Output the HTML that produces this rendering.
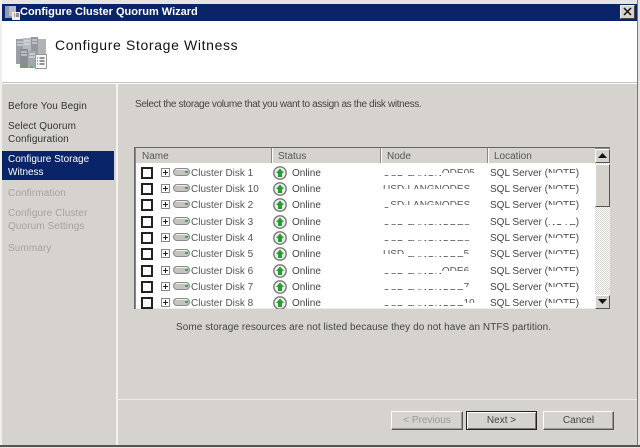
<!DOCTYPE html>
<html><head><meta charset="utf-8"><style>
html,body{margin:0;padding:0}
body{width:640px;height:448px;overflow:hidden;position:relative;background:#d6d3ce;font-family:"Liberation Sans",sans-serif;font-size:10px;color:#333}
div,span.a,svg{position:absolute}
.tx{white-space:nowrap;filter:blur(.3px);line-height:13px}
.g{color:#a5a29c}
.r{position:absolute;left:0;width:460px;height:16px}
.r .cb{left:7px;top:1px;width:8px;height:8px;border:2px solid #222;background:#fff}
.r .n{left:57px;top:1px;color:#555}
.r .s{left:158px;top:1px;color:#444}
.r .l{left:356px;top:1px;color:#444}
.r .d{left:222px;top:1px;width:100px;height:13px;color:#555;overflow:hidden}
.t{clip-path:inset(0 0 7px 0);display:inline-block}
.b{clip-path:inset(8px 0 0 0);display:inline-block}
.btn{height:17px;top:411px;background:#d6d3ce;border:1px solid;border-color:#fff #555 #555 #fff;box-shadow:inset -1px -1px 0 #999;text-align:center;line-height:17px;filter:blur(.2px)}
.hd{top:0;height:15px;line-height:17px;color:#555;filter:blur(.3px);border-right:1px solid #888;box-shadow:1px 0 0 #fff;box-sizing:border-box;padding-left:6px}
.sb{left:461px;width:13px;background:#d6d3ce;border:1px solid;border-color:#fff #555 #555 #fff}
</style></head><body>
<svg width="0" height="0" style="left:0;top:0">
<defs>
<g id="pl"><rect x=".5" y=".5" width="8" height="8" fill="#fff" stroke="#888"/><path d="M2 4.500h5M4.500 2v5" stroke="#222"/></g>
<g id="dk"><rect x=".5" y=".5" width="16" height="7" rx="3.500" fill="#c4c4c4" stroke="#8a8a8a"/><path d="M3 1.500h11" stroke="#eee"/><rect x="12" y="3" width="3" height="2" fill="#4a4"/></g>
<g id="up"><circle cx="7" cy="7" r="6.200" fill="#eee" stroke="#777" stroke-width="1.400"/><path d="M7 2.500L11 7H9V11H5V7H3z" fill="#1fa02f"/></g>
</defs></svg>

<div style="left:0;top:0;width:640px;height:4px;background:#e6e4e0"></div>
<div style="left:0;top:0;width:2px;height:448px;background:#f0efec"></div>
<div style="left:637px;top:0;width:1px;height:448px;background:#777"></div>
<div style="left:638px;top:0;width:2px;height:448px;background:#e6e4e0"></div>
<div style="left:0;top:445px;width:640px;height:2px;background:#555"></div>
<div style="left:0;top:447px;width:640px;height:1px;background:#e6e4e0"></div>

<div style="left:2px;top:4px;width:635px;height:17px;background:#0a246a"></div>
<svg style="left:4px;top:5px" width="16" height="15" viewBox="0 0 16 15"><rect x="1" y="1" width="9" height="12" fill="#8d9bb0"/><rect x="5" y="1" width="7" height="10" fill="#b8bec8"/><rect x="8" y="7" width="8" height="8" fill="#eee"/><path d="M10 9h1M10 11h1" stroke="#c22"/><path d="M12 9h3M12 11h3" stroke="#333"/></svg>
<div class="tx" style="left:20px;top:6px;color:#fff;font-weight:bold;font-size:11px">Configure Cluster Quorum Wizard</div>
<div style="left:620px;top:5px;width:13px;height:12px;background:#d6d3ce;border:1px solid;border-color:#eee #444 #444 #eee"></div>
<svg style="left:622px;top:6px" width="12" height="11" viewBox="0 0 12 11"><path d="M2 2l7 7M9 2l-7 7" stroke="#111" stroke-width="1.500"/></svg>

<div style="left:2px;top:21px;width:635px;height:61px;background:#fff"></div>
<div style="left:2px;top:82px;width:635px;height:1px;background:#c8c5bd"></div>
<div style="left:2px;top:83px;width:635px;height:1px;background:#fff"></div>
<svg style="left:14px;top:36px" width="33" height="33" viewBox="0 0 33 33">
<rect x="2" y="3" width="8" height="25" fill="#9a9ea6"/><rect x="9" y="2" width="8" height="26" fill="#b8bbc0"/><rect x="17" y="1" width="7" height="20" fill="#94989e"/><rect x="24" y="3" width="8" height="20" fill="#b0b2b4"/>
<rect x="6" y="13" width="8" height="19" fill="#8a8e94"/><rect x="14" y="15" width="8" height="17" fill="#a4a8ae"/>
<path d="M3 6h6M3 9h6M10 5h6M10 8h6M18 4h5M18 7h5M7 16h6M7 19h6M15 18h6M15 21h6" stroke="#e6e8ea"/>
<path d="M8 30h3M16 31h3" stroke="#4caf3c" stroke-width="1.500"/>
<rect x="21.500" y="18.500" width="11" height="14" fill="#f6f6f6" stroke="#999"/>
<path d="M23 22h1M23 25h1M23 28h1" stroke="#b33"/><path d="M25.500 22h5M25.500 25h5M25.500 28h5" stroke="#333"/></svg>
<div class="tx" style="left:55px;top:39px;color:#111;font-size:14px;letter-spacing:.64px">Configure Storage Witness</div>

<div style="left:116px;top:84px;width:2px;height:361px;background:#f3f2ef"></div>
<div style="left:118px;top:399px;width:519px;height:1px;background:#eeece8"></div>

<div class="tx" style="left:8px;top:100px;letter-spacing:.1px">Before You Begin</div>
<div class="tx" style="left:8px;top:120px;letter-spacing:.1px">Select Quorum<br>Configuration</div>
<div style="left:2px;top:151px;width:112px;height:29px;background:#0a246a"></div>
<div class="tx" style="left:8px;top:153px;color:#fff">Configure Storage<br>Witness</div>
<div class="tx g" style="left:8px;top:187px;letter-spacing:.1px">Confirmation</div>
<div class="tx g" style="left:8px;top:207px;letter-spacing:.1px">Configure Cluster<br>Quorum Settings</div>
<div class="tx g" style="left:8px;top:242px;letter-spacing:.1px">Summary</div>

<div class="tx" style="left:135px;top:98px;color:#444;letter-spacing:-.34px">Select the storage volume that you want to assign as the disk witness.</div>

<div style="left:134px;top:147px;width:476px;height:162px;background:#fff;box-shadow:inset 1px 1px 0 #666,inset 2px 2px 0 #888,inset -1px -1px 0 #eeece8;overflow:hidden">
 <div style="left:2px;top:1px;width:459px;height:15px;background:#d6d3ce;overflow:visible">
  <div class="hd" style="left:0;width:136px">Name</div>
  <div class="hd" style="left:136px;width:109px">Status</div>
  <div class="hd" style="left:245px;width:107px">Node</div>
  <div class="hd" style="left:352px;width:107px;border-right:0;box-shadow:none">Location</div>
 </div>

 <div class="r" style="top:19px"><div class="cb"></div><svg style="left:27px;top:2px" width="9" height="9"><use href="#pl"/></svg><svg style="left:39px;top:2px" width="18" height="9"><use href="#dk"/></svg><div class="tx n">Cluster Disk 1</div><svg style="left:139px;top:0" width="14" height="14"><use href="#up"/></svg><div class="tx s">Online</div><div class="tx d" style="left:249px"><span class="b">USD-LANGN</span><span class="t">ODE05</span></div><div class="tx l">SQL Server (<span class="t">NOTE</span>)</div></div>

 <div class="r" style="top:35px"><div class="cb"></div><svg style="left:27px;top:2px" width="9" height="9"><use href="#pl"/></svg><svg style="left:39px;top:2px" width="18" height="9"><use href="#dk"/></svg><div class="tx n">Cluster Disk 10</div><svg style="left:139px;top:0" width="14" height="14"><use href="#up"/></svg><div class="tx s">Online</div><div class="tx d" style="left:249px"><span class="t">USD-LANGNODES</span></div><div class="tx l">SQL Server (<span class="t">NOTE</span>)</div></div>

 <div class="r" style="top:51px"><div class="cb"></div><svg style="left:27px;top:2px" width="9" height="9"><use href="#pl"/></svg><svg style="left:39px;top:2px" width="18" height="9"><use href="#dk"/></svg><div class="tx n">Cluster Disk 2</div><svg style="left:139px;top:0" width="14" height="14"><use href="#up"/></svg><div class="tx s">Online</div><div class="tx d" style="left:249px"><span class="b">U</span><span class="t">SD-LANGNODES</span></div><div class="tx l">SQL Server (<span class="t">NOTE</span>)</div></div>

 <div class="r" style="top:68px"><div class="cb"></div><svg style="left:27px;top:2px" width="9" height="9"><use href="#pl"/></svg><svg style="left:39px;top:2px" width="18" height="9"><use href="#dk"/></svg><div class="tx n">Cluster Disk 3</div><svg style="left:139px;top:0" width="14" height="14"><use href="#up"/></svg><div class="tx s">Online</div><div class="tx d" style="left:249px"><span class="b">USD-LANGNODES</span></div><div class="tx l">SQL Server (<span class="b">NOTE</span>)</div></div>

 <div class="r" style="top:84px"><div class="cb"></div><svg style="left:27px;top:2px" width="9" height="9"><use href="#pl"/></svg><svg style="left:39px;top:2px" width="18" height="9"><use href="#dk"/></svg><div class="tx n">Cluster Disk 4</div><svg style="left:139px;top:0" width="14" height="14"><use href="#up"/></svg><div class="tx s">Online</div><div class="tx d" style="left:249px"><span class="b">USD-LANGNODES</span></div><div class="tx l">SQL Server (<span class="t">NOTE</span>)</div></div>

 <div class="r" style="top:100px"><div class="cb"></div><svg style="left:27px;top:2px" width="9" height="9"><use href="#pl"/></svg><svg style="left:39px;top:2px" width="18" height="9"><use href="#dk"/></svg><div class="tx n">Cluster Disk 5</div><svg style="left:139px;top:0" width="14" height="14"><use href="#up"/></svg><div class="tx s">Online</div><div class="tx d" style="left:249px"><span class="t">USD</span><span class="b">-LANGNODE</span><span class="t">5</span></div><div class="tx l">SQL Server (<span class="t">NOTE</span>)</div></div>

 <div class="r" style="top:117px"><div class="cb"></div><svg style="left:27px;top:2px" width="9" height="9"><use href="#pl"/></svg><svg style="left:39px;top:2px" width="18" height="9"><use href="#dk"/></svg><div class="tx n">Cluster Disk 6</div><svg style="left:139px;top:0" width="14" height="14"><use href="#up"/></svg><div class="tx s">Online</div><div class="tx d" style="left:249px"><span class="b">USD-LANGN</span><span class="t">ODE6</span></div><div class="tx l">SQL Server (<span class="t">NOTE</span>)</div></div>

 <div class="r" style="top:133px"><div class="cb"></div><svg style="left:27px;top:2px" width="9" height="9"><use href="#pl"/></svg><svg style="left:39px;top:2px" width="18" height="9"><use href="#dk"/></svg><div class="tx n">Cluster Disk 7</div><svg style="left:139px;top:0" width="14" height="14"><use href="#up"/></svg><div class="tx s">Online</div><div class="tx d" style="left:249px"><span class="b">USD-LANGNODE</span><span class="t">7</span></div><div class="tx l">SQL Server (<span class="t">NOTE</span>)</div></div>

 <div class="r" style="top:149px"><div class="cb"></div><svg style="left:27px;top:2px" width="9" height="9"><use href="#pl"/></svg><svg style="left:39px;top:2px" width="18" height="9"><use href="#dk"/></svg><div class="tx n">Cluster Disk 8</div><svg style="left:139px;top:0" width="14" height="14"><use href="#up"/></svg><div class="tx s">Online</div><div class="tx d" style="left:249px"><span class="b">USD-LANGNODE</span><span class="t">10</span></div><div class="tx l">SQL Server (<span class="t">NOTE</span>)</div></div>

 <div style="left:461px;top:2px;width:15px;height:160px;background:repeating-conic-gradient(#fff 0 25%,#d6d3ce 0 50%) 0 0/2px 2px"></div>
 <div class="sb" style="top:2px;height:12px"></div>
 <svg style="left:464px;top:6px" width="9" height="5"><path d="M4.500 0L9 5H0z" fill="#111"/></svg>
 <div class="sb" style="top:17px;height:41px"></div>
 <div class="sb" style="top:148px;height:12px"></div>
 <svg style="left:464px;top:152px" width="9" height="5"><path d="M4.500 5L9 0H0z" fill="#111"/></svg>
</div>

<div class="tx" style="left:176px;top:321px;color:#444;letter-spacing:.06px">Some storage resources are not listed because they do not have an NTFS partition.</div>

<div class="btn" style="left:391px;width:70px;color:#999">&lt; Previous</div>
<div class="btn" style="left:466px;width:69px;border-color:#222;box-shadow:inset 1px 1px 0 #fff,inset -1px -1px 0 #777;color:#444">Next &gt;</div>
<div class="btn" style="left:543px;width:69px;color:#444">Cancel</div>
</body></html>
